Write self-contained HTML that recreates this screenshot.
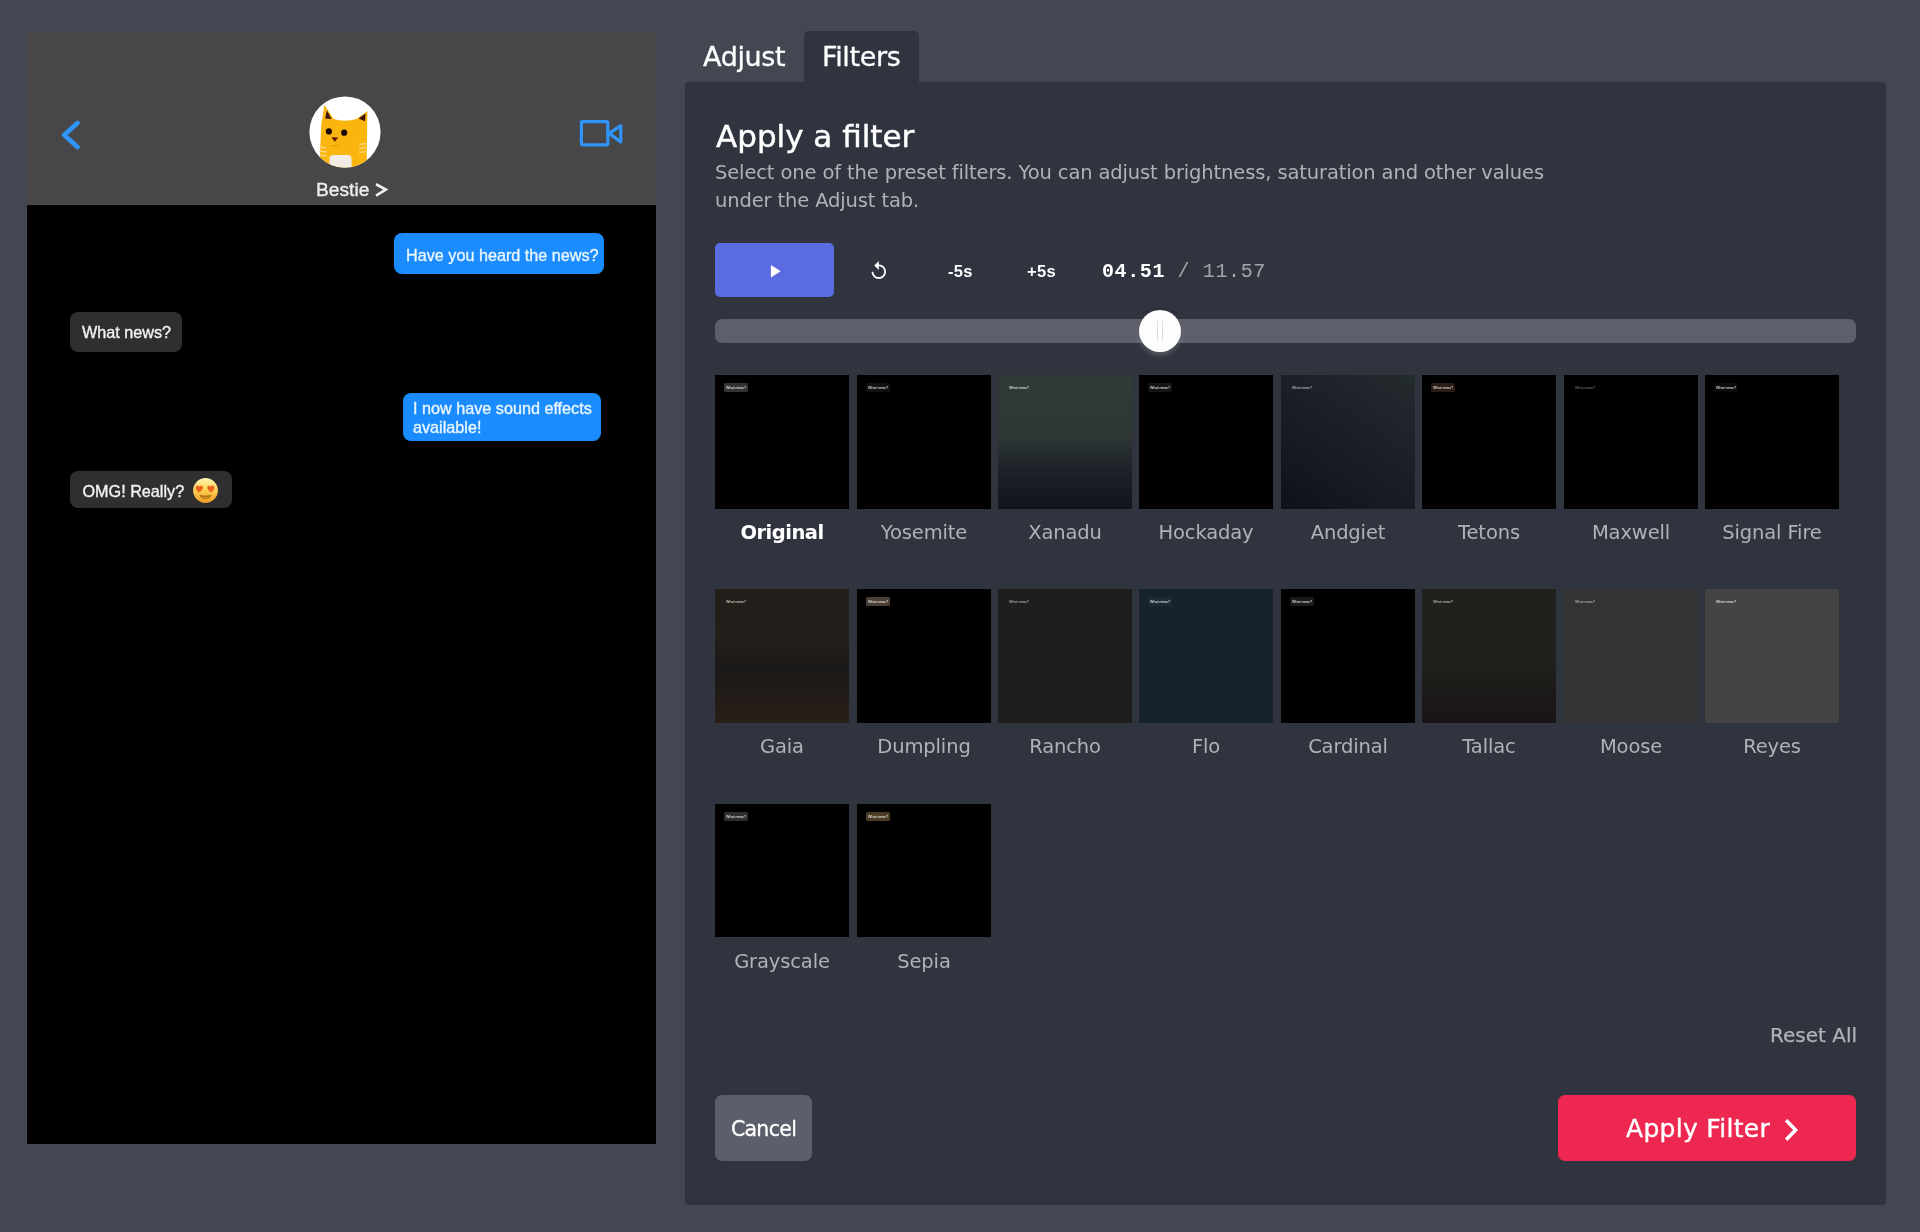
<!DOCTYPE html>
<html lang="en">
<head>
<meta charset="utf-8">
<title>Apply a filter</title>
<style>
*{box-sizing:border-box;margin:0;padding:0}
html,body{width:1920px;height:1232px;overflow:hidden}
body{background:#434752;position:relative;font-family:"DejaVu Sans","Liberation Sans",sans-serif;color:#fff}
#root{position:absolute;left:0;top:0;width:1920px;height:1232px;will-change:transform}
.abs{position:absolute}
/* ---------- video preview ---------- */
#video{position:absolute;left:28px;top:30px;width:628px;height:1114px;font-family:"Liberation Sans",sans-serif;-webkit-text-stroke:.35px currentColor}
#vbg{position:absolute;left:-.6px;top:2px;width:628.6px;height:1112px;background:#000}
#vfx{position:absolute;left:0;top:0;width:628px;height:1114px;filter:blur(.45px)}
#vhead{position:absolute;left:-.6px;top:2px;width:628.6px;height:172.7px;background:#474749}
.bub{position:absolute;border-radius:8px;color:#fff;font-size:16.2px;line-height:19px;white-space:nowrap}
.bub.b{background:#1a8cff}
.bub.g{background:#2f2f31}
/* ---------- editor panel ---------- */
#tabs .tab{position:absolute;top:31px;height:52px;font-size:27px;line-height:52px;letter-spacing:-.35px;color:#fff;white-space:nowrap;-webkit-text-stroke:.3px #fff}
#tabF{left:804px;width:115px;background:#30343f;border-radius:5px 5px 0 0}
#panel{position:absolute;left:685px;top:82px;width:1201px;height:1123px;background:#30343f;border-radius:4px}
h1{position:absolute;left:716px;top:114px;font-size:31px;line-height:44px;font-weight:400;-webkit-text-stroke:.45px #fff;white-space:nowrap}
#desc{position:absolute;left:715px;top:159px;font-size:19.5px;line-height:28px;letter-spacing:-.13px;color:#b0b2b9;white-space:nowrap}
#play{position:absolute;left:715px;top:243px;width:119px;height:54px;border-radius:5px;background:#5b6be0}
.ctl{position:absolute;top:259px;height:24px;line-height:24px;font-family:"Liberation Sans",sans-serif;font-size:16.5px;letter-spacing:.3px;font-weight:700;color:#fff;white-space:nowrap}
#time{position:absolute;left:1102px;top:260px;height:24px;line-height:24px;font-family:"Liberation Mono",monospace;font-size:20px;letter-spacing:.6px;white-space:nowrap;color:#a2a4ac}
#time b{color:#fff}
#track{position:absolute;left:715px;top:319px;width:1141px;height:24px;border-radius:7px;background:#5d5f6b}
#thumb{position:absolute;left:1139px;top:310px;width:42px;height:42px;border-radius:50%;background:#fdfdfe;box-shadow:0 3px 5px rgba(255,255,255,.22),0 0 3px rgba(20,22,30,.5)}
#thumb i{position:absolute;top:10.5px;width:1.2px;height:20px;background:#dcdcdf}
.f{position:absolute;width:134px}
.f .im{width:134px;height:134px;background:#000;position:relative;overflow:hidden}
.f .nm{position:absolute;left:-10px;width:154px;top:144px;text-align:center;font-size:19.5px;line-height:28px;letter-spacing:-.13px;color:#b0b2b9;white-space:nowrap}
.f.sel .nm{color:#fff;font-weight:700;letter-spacing:-.5px}
.f .wn{position:absolute;left:9px;top:8px;width:24px;height:8.6px;border-radius:1.5px;font-family:"Liberation Sans",sans-serif;font-size:3.6px;line-height:11.2px;color:#fff;text-align:center;white-space:nowrap;overflow:hidden}
#reset{position:absolute;left:1701px;width:156px;text-align:right;top:1021px;font-size:20px;line-height:28px;color:#b0b2b9;white-space:nowrap;-webkit-text-stroke:.25px #b0b2b9}
#cancel{position:absolute;left:715px;top:1095px;width:97px;height:66px;border-radius:7px;background:#5c5f6b;font-size:20.5px;line-height:69px;letter-spacing:-.7px;text-align:center;color:#fff;-webkit-text-stroke:.3px #fff}
#apply{position:absolute;left:1558px;top:1095px;width:298px;height:66px;border-radius:7px;background:#ee2750;font-size:25px;line-height:68px;letter-spacing:.3px;color:#fff;white-space:nowrap;-webkit-text-stroke:.4px #fff}
</style>
</head>
<body>
<div id="root">

<!-- ================= VIDEO PREVIEW ================= -->
<div id="video">
  <div id="vbg"></div>
  <div id="vhead"></div>
  <div id="vfx">
  <!-- back chevron -->
  <svg class="abs" style="left:24px;top:84px" width="40" height="44" viewBox="0 0 40 44"><path d="M25.5 9 L12.2 21 L25.5 33" fill="none" stroke="#2f95fb" stroke-width="4.6" stroke-linecap="round" stroke-linejoin="round"/></svg>
  <!-- avatar -->
  <svg class="abs" style="left:280px;top:65px" width="74" height="74" viewBox="0 0 74 74">
    <defs><clipPath id="cav"><circle cx="37" cy="37" r="35.6"/></clipPath></defs>
    <circle cx="37" cy="37" r="35.6" fill="#fff"/>
    <g clip-path="url(#cav)">
      <path d="M11.4 74 L13.2 30 L16.4 9.8 L25.6 24 Q37 27.4 48.6 24 L59.4 16 L58.6 74 Z" fill="#fbb50f"/>
      <path d="M17.2 23.4 L18.9 15.2 L23.6 24 Z" fill="#3d1208"/>
      <path d="M50.6 23.4 L57.6 18.6 L57 26.2 Z" fill="#3d1208"/>
      <circle cx="20.9" cy="36.4" r="3.1" fill="#1b0b05"/>
      <circle cx="36.2" cy="37.7" r="3.1" fill="#1b0b05"/>
      <path d="M23.4 42.2 L30.2 42.4 L26.8 46.8 Z" fill="#5a1208"/>
      <path d="M22.6 50.6 Q24.6 51.6 26.8 50.6 Q29 51.6 31 50.4" fill="none" stroke="#d99a0a" stroke-width=".9"/>
      <rect x="21.4" y="60" width="22.2" height="16" rx="4" fill="#f1ece4"/>
      <path d="M11.6 52 L18.4 53 M11.6 56 L18.4 57 M11.6 60 L18.4 61 M51 49.6 L58.6 48.6 M51 53.6 L58.6 52.6 M51 57.6 L58.6 56.6" stroke="#fcd377" stroke-width="1.5"/>
    </g>
  </svg>
  <div class="abs" id="vname" style="left:288px;top:149px;font-size:19.2px;line-height:22px;color:#efeff0;white-space:nowrap">Bestie</div>
  <svg class="abs" style="left:344px;top:151px" width="18" height="18" viewBox="0 0 18 18"><path d="M4 3.2 L13.8 8.6 L4 14.6" fill="none" stroke="#efeff0" stroke-width="2.7" stroke-linejoin="miter"/></svg>
  <!-- camera -->
  <svg class="abs" style="left:548px;top:86px" width="52" height="36" viewBox="0 0 52 36"><g fill="none" stroke="#2f95fb" stroke-width="3.2" stroke-linejoin="round"><rect x="5.4" y="5.6" width="26.4" height="23.2" rx="1.2"/><path d="M33.2 17.4 L44.8 9.6 L44.8 26 Z"/></g></svg>
  <!-- bubbles -->
  <div class="bub b" style="left:366px;top:203px;width:210px;height:41px"><span class="abs" id="t1" style="left:12px;top:12.5px;color:#e9f5ff">Have you heard the news?</span></div>
  <div class="bub g" style="left:42px;top:282px;width:112px;height:40px"><span class="abs" id="t2" style="left:12px;top:11px;color:#f3f3f3">What news?</span></div>
  <div class="bub b" style="left:375px;top:363px;width:198px;height:48px"><span class="abs" id="t3" style="left:10px;top:5.5px;color:#e9f5ff">I now have sound effects<br>available!</span></div>
  <div class="bub g" style="left:42px;top:441px;width:162px;height:37px"><span class="abs" id="t4" style="left:12.5px;top:10.5px;color:#f3f3f3">OMG! Really?</span>
    <svg class="abs" style="left:121.8px;top:6.3px" width="27" height="27" viewBox="0 0 27 27">
      <defs><linearGradient id="emg" x1="0" y1="0" x2="0" y2="1"><stop offset="0" stop-color="#fff8b4"/><stop offset=".42" stop-color="#fed65a"/><stop offset="1" stop-color="#f09c22"/></linearGradient></defs>
      <circle cx="13.5" cy="13.5" r="12.4" fill="url(#emg)"/>
      <g fill="#ec6420">
        <path d="M7.2 15.4 C3.4 12.9 3.1 9.7 4.9 8.8 C6.1 8.2 7 8.9 7.3 9.8 C7.8 8.9 9 8.3 10.1 9 C11.7 10.2 10.7 13.2 7.2 15.4Z"/>
        <path d="M19 15.4 C15.5 13.2 14.5 10.2 16.1 9 C17.2 8.3 18.4 8.9 18.9 9.8 C19.2 8.9 20.1 8.2 21.3 8.8 C23.1 9.7 22.8 12.9 19 15.4Z"/>
      </g>
      <path d="M7.4 17.8 Q13.5 19.3 19.6 17.8 Q18.2 22.2 13.5 22.2 Q8.8 22.2 7.4 17.8Z" fill="#a97b10"/>
      <path d="M9.6 20.4 Q13.5 19.6 17.4 20.4 Q15.8 22.2 13.5 22.2 Q11.2 22.2 9.6 20.4Z" fill="#d88a1c"/>
    </svg>
  </div>
  </div>
</div>

<!-- ================= TABS ================= -->
<div id="tabs">
  <div class="tab" id="tabA" style="left:703px">Adjust</div>
  <div class="tab" id="tabF"><span style="position:absolute;left:18px">Filters</span></div>
</div>

<!-- ================= PANEL ================= -->
<div id="panel"></div>
<h1>Apply a filter</h1>
<div id="desc">Select one of the preset filters. You can adjust brightness, saturation and other values<br>under the Adjust tab.</div>

<div id="play"><svg class="abs" style="left:52px;top:19px" width="16" height="16" viewBox="0 0 16 16"><path d="M3.9 3.1 L13.7 9.3 L3.9 15.5 Z" fill="#fff"/></svg></div>
<svg class="abs" style="left:868px;top:260.3px" width="21.6" height="21.6" viewBox="0 0 24 24"><path d="M12 5V1L7 6l5 5V7c3.31 0 6 2.69 6 6s-2.69 6-6 6-6-2.69-6-6H4c0 4.42 3.58 8 8 8s8-3.58 8-8-3.58-8-8-8z" fill="#fff"/></svg>
<div class="ctl" style="left:948px">-5s</div>
<div class="ctl" style="left:1027px">+5s</div>
<div id="time"><b>04.51</b> / 11.57</div>

<div id="track"></div>
<div id="thumb"><i style="left:18.3px"></i><i style="left:23px"></i></div>

<div id="filters">
<div class="f sel" style="left:715px;top:375px"><div class="im" style="background:#000"><div class="wn" style="background:#333;color:#fff">What news?</div></div><div class="nm">Original</div></div>
<div class="f" style="left:857px;top:375px"><div class="im" style="background:#000"><div class="wn" style="background:#111;color:#fff">What news?</div></div><div class="nm">Yosemite</div></div>
<div class="f" style="left:998px;top:375px"><div class="im" style="background:linear-gradient(180deg,#2f3a38 0%,#2e3736 45%,#1b1f27 75%,#12141c 100%)"><div class="wn" style="background:transparent;color:#fff">What news?</div></div><div class="nm">Xanadu</div></div>
<div class="f" style="left:1139px;top:375px"><div class="im" style="background:#000"><div class="wn" style="background:#151515;color:#fff">What news?</div></div><div class="nm">Hockaday</div></div>
<div class="f" style="left:1281px;top:375px"><div class="im" style="background:linear-gradient(215deg,#232b2d 0%,#20222b 30%,#171921 70%,#0f1118 100%)"><div class="wn" style="background:transparent;color:#ddd">What news?</div></div><div class="nm">Andgiet</div></div>
<div class="f" style="left:1422px;top:375px"><div class="im" style="background:#000"><div class="wn" style="background:#2a1c14;color:#fff">What news?</div></div><div class="nm">Tetons</div></div>
<div class="f" style="left:1564px;top:375px"><div class="im" style="background:#000"><div class="wn" style="background:transparent;color:#888">What news?</div></div><div class="nm">Maxwell</div></div>
<div class="f" style="left:1705px;top:375px"><div class="im" style="background:#000"><div class="wn" style="background:#0a0a0a;color:#fff">What news?</div></div><div class="nm">Signal Fire</div></div>
<div class="f" style="left:715px;top:589px"><div class="im" style="background:linear-gradient(180deg,#241e1a 0%,#251f1b 36%,#1c1a18 53%,#1b1917 63%,#241c18 82%,#2a1f19 100%)"><div class="wn" style="background:transparent;color:#f1e6da">What news?</div></div><div class="nm">Gaia</div></div>
<div class="f" style="left:857px;top:589px"><div class="im" style="background:#000"><div class="wn" style="background:#4b3e34;color:#fff">What news?</div></div><div class="nm">Dumpling</div></div>
<div class="f" style="left:998px;top:589px"><div class="im" style="background:#1e1e1c"><div class="wn" style="background:transparent;color:#ccc">What news?</div></div><div class="nm">Rancho</div></div>
<div class="f" style="left:1139px;top:589px"><div class="im" style="background:#16232d"><div class="wn" style="background:#1b2a35;color:#fff">What news?</div></div><div class="nm">Flo</div></div>
<div class="f" style="left:1281px;top:589px"><div class="im" style="background:#000"><div class="wn" style="background:#1a1a1a;color:#fff">What news?</div></div><div class="nm">Cardinal</div></div>
<div class="f" style="left:1422px;top:589px"><div class="im" style="background:linear-gradient(180deg,#20201c 0%,#1f1f1b 60%,#181415 100%)"><div class="wn" style="background:transparent;color:#ddd">What news?</div></div><div class="nm">Tallac</div></div>
<div class="f" style="left:1564px;top:589px"><div class="im" style="background:#333333"><div class="wn" style="background:transparent;color:#ccc">What news?</div></div><div class="nm">Moose</div></div>
<div class="f" style="left:1705px;top:589px"><div class="im" style="background:#444444"><div class="wn" style="background:transparent;color:#fff">What news?</div></div><div class="nm">Reyes</div></div>
<div class="f" style="left:715px;top:804px"><div class="im" style="height:133px;background:#000"><div class="wn" style="background:#2e2e2e;color:#fff">What news?</div></div><div class="nm">Grayscale</div></div>
<div class="f" style="left:857px;top:804px"><div class="im" style="height:133px;background:#000"><div class="wn" style="background:#4a3c24;color:#fff">What news?</div></div><div class="nm">Sepia</div></div>
</div>

<div id="reset">Reset All</div>
<div id="cancel">Cancel</div>
<div id="apply"><span style="position:absolute;left:68px">Apply Filter</span><svg class="abs" style="left:220px;top:20px" width="26" height="30" viewBox="0 0 26 30"><path d="M8.1 5.2 L17.6 15 L8.1 24.8" fill="none" stroke="#fff" stroke-width="3.6" stroke-linejoin="miter"/></svg></div>

</div>
</body>
</html>
